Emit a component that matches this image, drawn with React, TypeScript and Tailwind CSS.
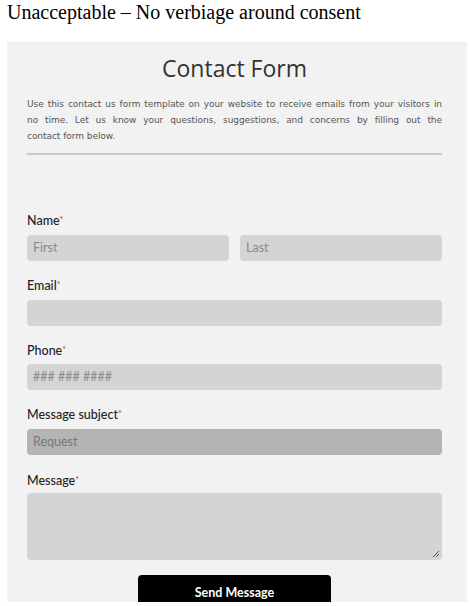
import React from "react";

const labelFont = { fontFamily: "Lato, 'Noto Sans', sans-serif" };

function Label({ text }: { text: string }) {
  return (
    <div
      className="h-[16px] text-[12.5px] leading-[16px] font-medium text-[#222]"
      style={labelFont}
    >
      {text}
      <span className="text-[#d33] text-[9px] align-top relative top-[-1px]">*</span>
    </div>
  );
}

function Field({ placeholder }: { placeholder?: string }) {
  return (
    <div
      className="h-[26px] rounded-[4px] bg-[#d4d4d4] px-[6px] flex items-center text-[12.5px] text-[#8a8a8a]"
      style={labelFont}
    >
      {placeholder}
    </div>
  );
}

export default function App() {
  return (
    <div className="min-h-[606px] bg-white pt-[1px]">
      <div
        className="pl-[7px] text-[20px] leading-[23px] text-black"
        style={{ fontFamily: "'Liberation Serif', 'Times New Roman', serif" }}
      >
        Unacceptable – No verbiage around consent
      </div>

      <div className="ml-[7px] mt-[18px] w-[460px] h-[560px] bg-[#f2f2f2] pl-[20px] pr-[25px] overflow-hidden">
        <h1
          className="pt-[10px] text-center text-[23px] leading-[32px] text-[#333]"
          style={{ fontFamily: "'Open Sans', sans-serif" }}
        >
          Contact Form
        </h1>

        <div
          className="mt-[12px] text-[9px] leading-[16px] tracking-[-0.05px] text-[#555]"
          style={{ fontFamily: "'DejaVu Sans', Verdana, sans-serif" }}
        >
          <p className="whitespace-nowrap text-justify [text-align-last:justify]">
            Use this contact us form template on your website to receive emails from your visitors in
          </p>
          <p className="whitespace-nowrap text-justify [text-align-last:justify]">
            no time. Let us know your questions, suggestions, and concerns by filling out the
          </p>
          <p>contact form below.</p>
        </div>

        <div className="mt-[9px] h-[2px] bg-[#c9c9c9]" />

        <div className="mt-[58px] flex flex-col gap-[6px]">
          <Label text="Name" />
          <div className="grid grid-cols-2 gap-[11px]">
            <Field placeholder="First" />
            <Field placeholder="Last" />
          </div>
        </div>

        <div className="mt-[17px] flex flex-col gap-[6px]">
          <Label text="Email" />
          <Field />
        </div>

        <div className="mt-[17px] flex flex-col gap-[5px]">
          <Label text="Phone" />
          <Field placeholder="### ### ####" />
        </div>

        <div className="mt-[17px] flex flex-col gap-[6px]">
          <Label text="Message subject" />
          <div
            className="h-[26px] rounded-[4px] bg-[#b4b4b4] px-[6px] flex items-center justify-between text-[12.5px] text-[#777]"
            style={labelFont}
          >
            <span>Request</span>
            <svg width="10" height="6" viewBox="0 0 10 6" className="mr-[6px]">
              <path d="M1 1l4 4 4-4" fill="none" stroke="#a8a8a8" strokeWidth="1" />
            </svg>
          </div>
        </div>

        <div className="mt-[18px] flex flex-col gap-[4px]">
          <Label text="Message" />
          <div className="relative h-[67px] rounded-[4px] bg-[#d4d4d4]">
            <svg width="8" height="8" viewBox="0 0 8 8" className="absolute right-[2px] bottom-[2px]">
              <path d="M7 1L1 7M7 4L4 7" stroke="#555" strokeWidth="1" />
            </svg>
          </div>
        </div>

        <div className="mt-[15px] flex justify-center">
          <button
            className="w-[193px] h-[36px] rounded-[4px] bg-black text-white text-[12.5px] font-bold"
            style={labelFont}
          >
            Send Message
          </button>
        </div>
      </div>
    </div>
  );
}
